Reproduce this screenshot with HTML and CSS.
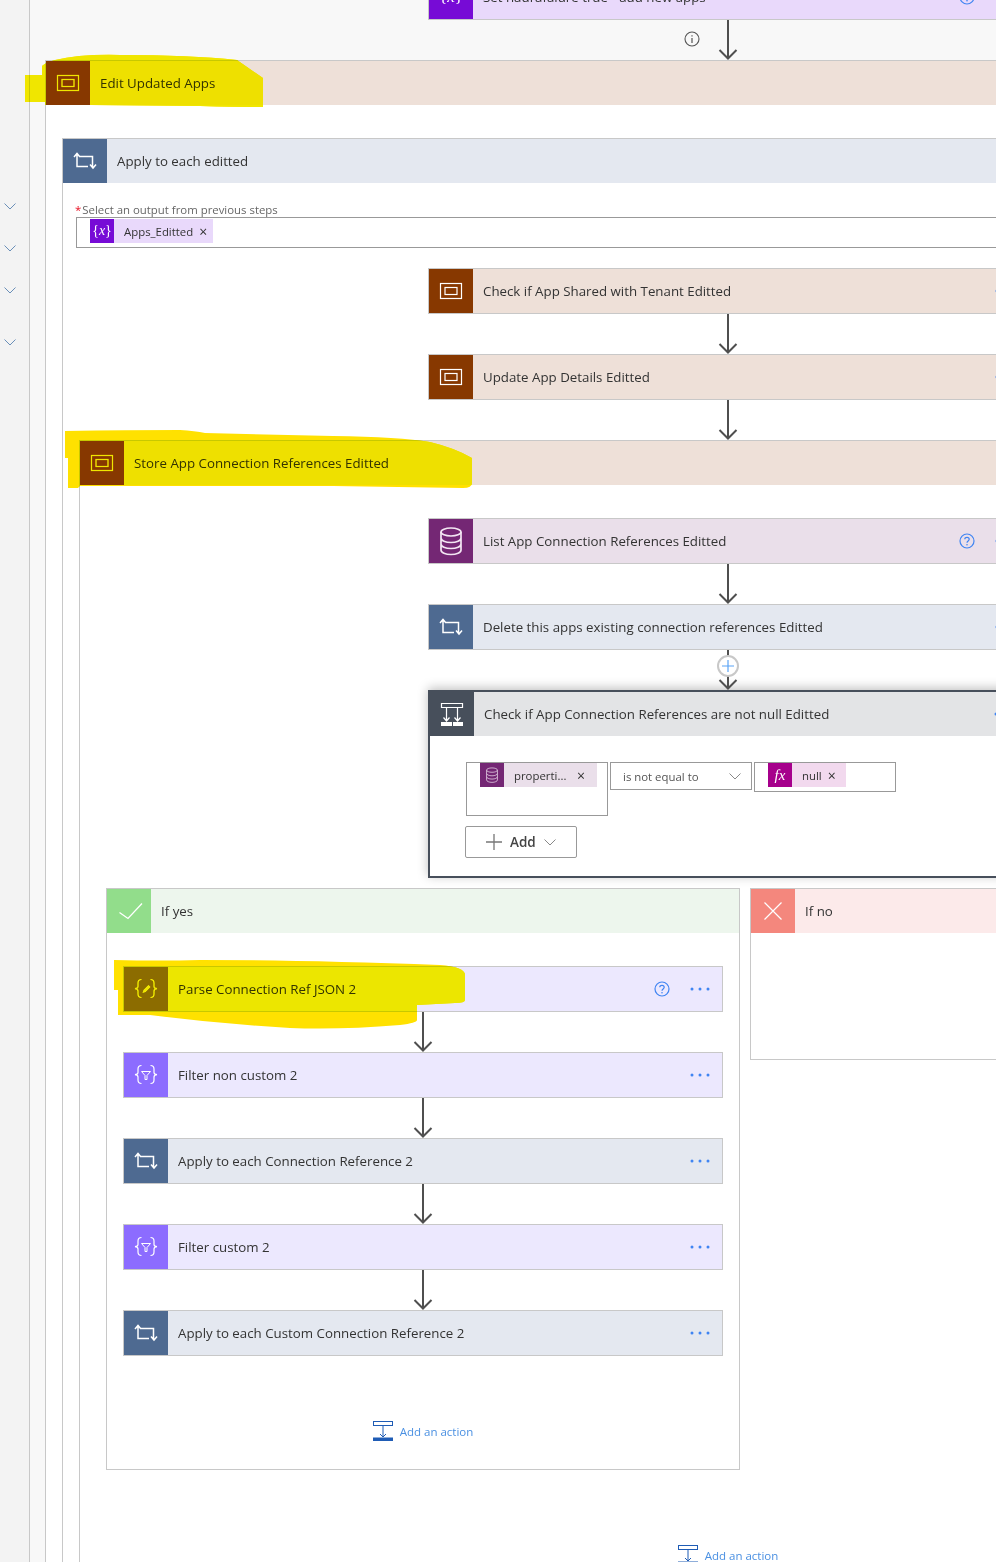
FILE: index.html
```html
<!DOCTYPE html>
<html lang="en">
<head>
<meta charset="utf-8">
<title>Flow designer</title>
<link rel="stylesheet" href="styles.css">
</head>
<body>
<svg class="defs" width="0" height="0" aria-hidden="true">
  <symbol id="i-control" viewBox="0 0 44 44"><rect x="11.500" y="14.500" width="21" height="15" fill="none" stroke="#fff" stroke-width="1.200"/><rect x="16" y="18.500" width="12" height="7" fill="none" stroke="#fff" stroke-width="1.200"/></symbol>
  <symbol id="i-loop" viewBox="0 0 44 44"><path d="M14 15v12.500h11M17 17.500h12.500V28M11 18l3-3.500 3 3.500M27 25.500l3 3.500 3-3.500" fill="none" stroke="#fff" stroke-width="1.500"/></symbol>
  <symbol id="i-db" viewBox="0 0 44 44"><g fill="none" stroke="#f3e6f3" stroke-width="1.700"><ellipse cx="22" cy="13" rx="10" ry="4"/><path d="M12 13v18c0 2.500 4.500 4.500 10 4.500s10-2 10-4.500V13M12 19c0 2.500 4.500 4.500 10 4.500s10-2 10-4.500M12 25c0 2.500 4.500 4.500 10 4.500s10-2 10-4.500"/></g></symbol>
  <symbol id="i-cond" viewBox="0 0 44 44"><path d="M11.500 11.500h21v4h-21z" fill="none" stroke="#fff" stroke-width="1.200"/><path d="M16.500 16v13M27.500 16v13M13.500 25.500l3 3.500 3-3.500M24.500 25.500l3 3.500 3-3.500" fill="none" stroke="#fff" stroke-width="1.200"/><path d="M11 30h11v4H11zM23 30h10v4H23z" fill="#fff"/></symbol>
  <symbol id="i-check" viewBox="0 0 44 44"><path d="M12.500 23.500l8.500 6 14-15" fill="none" stroke="#fff" stroke-width="1.300"/></symbol>
  <symbol id="i-cross" viewBox="0 0 44 44"><path d="M13.500 13.500l17 17M30.500 13.500l-17 17" fill="none" stroke="#fff" stroke-width="1.200"/></symbol>
  <symbol id="i-braces" viewBox="0 0 44 44"><path d="M17.500 12.500c-3 0-3.500 1.500-3.500 3.500v3.500c0 1.500-1 2-3 2.200 2 .2 3 .7 3 2.200V27c0 2 .5 3.500 3.500 3.500M26.500 12.500c3 0 3.500 1.500 3.500 3.500v3.500c0 1.500 1 2 3 2.200-2 .2-3 .7-3 2.200V27c0 2-.5 3.500-3.500 3.500" fill="none" stroke="currentColor" stroke-width="1.200"/></symbol>
  <symbol id="i-help" viewBox="0 0 16 16"><circle cx="8" cy="8" r="7" fill="none" stroke="#3f84f2" stroke-width="1.200"/><path d="M5.800 6.300c0-1.300 1-2 2.200-2s2.200.8 2.200 2c0 1.700-2.200 1.700-2.200 3.500" fill="none" stroke="#3f84f2" stroke-width="1.200"/><circle cx="8" cy="11.700" r=".8" fill="#3f84f2"/></symbol>
  <symbol id="i-dots" viewBox="0 0 22 4"><circle cx="3" cy="2" r="1.500"/><circle cx="11" cy="2" r="1.500"/><circle cx="19" cy="2" r="1.500"/></symbol>
  <symbol id="i-arrow" viewBox="0 0 20 40"><path d="M10 0v38M1.500 30l8.500 8.500 8.500-8.500" fill="none" stroke="#4f4f4f" stroke-width="2"/></symbol>
  <symbol id="i-chev" viewBox="0 0 12 7"><path d="M.5.500L6 6l5.500-5.500" fill="none" stroke="currentColor"/></symbol>
  <symbol id="i-add" viewBox="0 0 20 20"><rect x=".5" y=".5" width="19" height="4" fill="none" stroke="#1f5cb5"/><path d="M10 5v11M7 13l3 3 3-3" fill="none" stroke="#1f5cb5"/><path d="M0 16.500h20V20H0z" fill="#1f5cb5"/></symbol>
</svg>

<div class="page">
  <aside class="rail">
    <svg class="rail__chev"><use href="#i-chev"/></svg>
    <svg class="rail__chev"><use href="#i-chev"/></svg>
    <svg class="rail__chev"><use href="#i-chev"/></svg>
    <svg class="rail__chev rail__chev--far"><use href="#i-chev"/></svg>
  </aside>

  <main class="canvas">
    <div class="node node--var">
      <span class="node__icon var-glyph">{<i>x</i>}</span>
      <span class="node__title">Set hadrafalure true - add new apps</span>
      <span class="node__actions"><svg class="help"><use href="#i-help"/></svg><svg class="dots"><use href="#i-dots"/></svg></span>
    </div>
    <div class="arrow">
      <svg class="arrow__line"><use href="#i-arrow"/></svg>
      <svg class="arrow__info" viewBox="0 0 16 16"><circle cx="8" cy="8" r="7" fill="none" stroke="#555" stroke-width="1.100"/><path d="M8 7v5M8 4.200v1.300" stroke="#555" stroke-width="1.200"/></svg>
    </div>

    <section class="scope scope--edit">
      <header class="head head--control">
        <span class="node__icon"><svg class="glyph"><use href="#i-control"/></svg></span>
        <span class="node__title">Edit Updated Apps</span>
      </header>
      <div class="scope__body">

        <section class="scope scope--loop">
          <header class="head head--loop">
            <span class="node__icon"><svg class="glyph"><use href="#i-loop"/></svg></span>
            <span class="node__title">Apply to each editted</span>
          </header>
          <div class="loop__body">
            <div class="field-wrap">
              <div class="field-label"><span class="req">*</span>Select an output from previous steps</div>
              <div class="field">
                <span class="chip chip--var"><span class="chip__icon var-glyph">{<i>x</i>}</span><span class="chip__text">Apps_Editted</span><span class="chip__x">×</span></span>
              </div>
            </div>

            <div class="node node--control node--first">
              <span class="node__icon"><svg class="glyph"><use href="#i-control"/></svg></span>
              <span class="node__title">Check if App Shared with Tenant Editted</span>
              <span class="node__actions"><svg class="dots"><use href="#i-dots"/></svg></span>
            </div>
            <svg class="arrow__line"><use href="#i-arrow"/></svg>
            <div class="node node--control">
              <span class="node__icon"><svg class="glyph"><use href="#i-control"/></svg></span>
              <span class="node__title">Update App Details Editted</span>
              <span class="node__actions"><svg class="dots"><use href="#i-dots"/></svg></span>
            </div>
            <svg class="arrow__line"><use href="#i-arrow"/></svg>

            <section class="scope scope--store">
              <header class="head head--control">
                <span class="node__icon"><svg class="glyph"><use href="#i-control"/></svg></span>
                <span class="node__title">Store App Connection References Editted</span>
              </header>
              <div class="scope__body">
                <div class="node node--db">
                  <span class="node__icon"><svg class="glyph"><use href="#i-db"/></svg></span>
                  <span class="node__title">List App Connection References Editted</span>
                  <span class="node__actions"><svg class="help"><use href="#i-help"/></svg><svg class="dots"><use href="#i-dots"/></svg></span>
                </div>
                <svg class="arrow__line"><use href="#i-arrow"/></svg>
                <div class="node node--loop">
                  <span class="node__icon"><svg class="glyph"><use href="#i-loop"/></svg></span>
                  <span class="node__title">Delete this apps existing connection references Editted</span>
                  <span class="node__actions"><svg class="dots"><use href="#i-dots"/></svg></span>
                </div>
                <div class="arrow arrow--plus">
                  <svg class="arrow__line"><use href="#i-arrow"/></svg>
                  <span class="plus"><svg viewBox="0 0 12 12"><path d="M6 0v12M0 6h12" stroke="#5ba4f5" stroke-width="1.200"/></svg></span>
                </div>

                <section class="cond">
                  <header class="cond__head">
                    <span class="cond__icon"><svg class="glyph"><use href="#i-cond"/></svg></span>
                    <span class="node__title">Check if App Connection References are not null Editted</span>
                    <span class="node__actions"><svg class="dots"><use href="#i-dots"/></svg></span>
                  </header>
                  <div class="cond__body">
                    <div class="cond__row">
                      <div class="cell cell--left">
                        <span class="chip chip--db"><span class="chip__icon"><svg class="chip__glyph"><use href="#i-db"/></svg></span><span class="chip__text chip__text--prop">properti...</span><span class="chip__x">×</span></span>
                      </div>
                      <div class="cell cell--op"><span>is not equal to</span><svg class="op__chev"><use href="#i-chev"/></svg></div>
                      <div class="cell cell--right">
                        <span class="chip chip--fx"><span class="chip__icon fx-glyph">fx</span><span class="chip__text">null</span><span class="chip__x">×</span></span>
                      </div>
                    </div>
                    <button class="add-btn" type="button">
                      <svg class="add-btn__plus" viewBox="0 0 16 16"><path d="M8 0v16M0 8h16" stroke="#777" stroke-width="1.300"/></svg>
                      <span>Add</span>
                      <svg class="add-btn__chev"><use href="#i-chev"/></svg>
                    </button>
                  </div>
                </section>

                <div class="branches">
                  <section class="branch branch--yes">
                    <header class="branch__head">
                      <span class="node__icon"><svg class="glyph"><use href="#i-check"/></svg></span>
                      <span class="node__title">If yes</span>
                    </header>
                    <div class="branch__body">
                      <div class="node node--filter">
                        <span class="node__icon braces"><svg class="glyph"><use href="#i-braces"/></svg><svg class="glyph glyph--inner" viewBox="0 0 44 44"><path d="M18.500 26l1-3 5-5 2 2-5 5z" fill="#fff"/></svg></span>
                        <span class="node__title">Parse Connection Ref JSON 2</span>
                        <span class="node__actions"><svg class="help"><use href="#i-help"/></svg><svg class="dots"><use href="#i-dots"/></svg></span>
                      </div>
                      <svg class="arrow__line"><use href="#i-arrow"/></svg>
                      <div class="node node--filter">
                        <span class="node__icon braces"><svg class="glyph"><use href="#i-braces"/></svg><svg class="glyph glyph--inner" viewBox="0 0 44 44"><path d="M17.500 18.500h9l-3.500 4v4h-2v-4z" fill="none" stroke="#fff"/></svg></span>
                        <span class="node__title">Filter non custom 2</span>
                        <span class="node__actions"><svg class="dots"><use href="#i-dots"/></svg></span>
                      </div>
                      <svg class="arrow__line"><use href="#i-arrow"/></svg>
                      <div class="node node--loop">
                        <span class="node__icon"><svg class="glyph"><use href="#i-loop"/></svg></span>
                        <span class="node__title">Apply to each Connection Reference 2</span>
                        <span class="node__actions"><svg class="dots"><use href="#i-dots"/></svg></span>
                      </div>
                      <svg class="arrow__line"><use href="#i-arrow"/></svg>
                      <div class="node node--filter">
                        <span class="node__icon braces"><svg class="glyph"><use href="#i-braces"/></svg><svg class="glyph glyph--inner" viewBox="0 0 44 44"><path d="M17.500 18.500h9l-3.500 4v4h-2v-4z" fill="none" stroke="#fff"/></svg></span>
                        <span class="node__title">Filter custom 2</span>
                        <span class="node__actions"><svg class="dots"><use href="#i-dots"/></svg></span>
                      </div>
                      <svg class="arrow__line"><use href="#i-arrow"/></svg>
                      <div class="node node--loop">
                        <span class="node__icon"><svg class="glyph"><use href="#i-loop"/></svg></span>
                        <span class="node__title">Apply to each Custom Connection Reference 2</span>
                        <span class="node__actions"><svg class="dots"><use href="#i-dots"/></svg></span>
                      </div>
                      <a class="add-action add-action--inner"><svg class="add-action__icon"><use href="#i-add"/></svg><span>Add an action</span></a>
                    </div>
                  </section>

                  <section class="branch branch--no">
                    <header class="branch__head">
                      <span class="node__icon"><svg class="glyph"><use href="#i-cross"/></svg></span>
                      <span class="node__title">If no</span>
                    </header>
                  </section>
                </div>

                <a class="add-action add-action--outer"><svg class="add-action__icon"><use href="#i-add"/></svg><span>Add an action</span></a>
              </div>
            </section>
          </div>
        </section>

      </div>
    </section>
  </main>

  <svg class="marker" viewBox="0 0 996 1562" aria-hidden="true">
    <defs>
      <clipPath id="clip-heads">
        <rect x="0" y="50" width="996" height="58"/>
        <rect x="79" y="440" width="917" height="45"/>
        <rect x="123" y="966" width="600" height="46"/>
      </clipPath>
      <path id="strokes" d="M25 75H42V66Q46 62 55 60Q80 54 120 55Q190 55 237 60L263 78V107Q240 107 200 106L90 105H45V102H25ZM65 431Q130 430 180 430Q195 431 205 433L333 436Q400 437 430 442Q455 448 472 458V483Q472 488 463 488L333 486H80L78 488H68V458H65ZM114 960Q160 961 200 960Q300 960 440 965Q465 967 465 975V1000Q465 1003 455 1003L417 1005V1020Q417 1023 400 1025Q340 1030 290 1028Q220 1024 150 1015H118V990H114Z"/>
    </defs>
    <use href="#strokes" fill="#ffe100"/>
    <use href="#strokes" fill="#f0e600" clip-path="url(#clip-heads)"/>
  </svg>
</div>
</body>
</html>
```
FILE: styles.css
```css
* { box-sizing: border-box; }
html, body { margin: 0; padding: 0; overflow: hidden; }
body { font-family: "Open Sans", "Noto Sans", sans-serif; font-size: 13.300px; color: #333; background: #fff; }
.defs { position: absolute; }

.page { position: relative; display: flex; width: 996px; height: 1562px; overflow: hidden; background: #f8f8f8; }

/* left rail */
.rail { flex: none; width: 30px; display: flex; flex-direction: column; align-items: flex-start; padding: 203px 0 0 4px; background: #f3f3f3; border-right: 1px solid #c8c8c8; }
.rail__chev { width: 12px; height: 7px; margin-bottom: 35px; color: #6a8fb8; }
.rail__chev--far { margin-top: 10px; }

/* canvas */
.canvas { flex: none; width: 1396px; margin-top: -26px; display: flex; flex-direction: column; align-items: center; }

/* node */
.node { flex: none; display: flex; align-items: center; width: 600px; height: 46px; border: 1px solid #c8c8c8; }
.node--first { margin-top: 20px; }
.node__icon { flex: none; position: relative; display: flex; align-items: center; justify-content: center; width: 44px; height: 44px; color: #fff; }
.node__title { padding-left: 10px; white-space: nowrap; }
.node__actions { margin-left: auto; display: flex; align-items: center; padding-right: 11px; }
.glyph { display: block; width: 44px; height: 44px; }
.glyph--inner { position: absolute; left: 0; top: 0; }
.help { width: 16px; height: 16px; margin-right: 19px; }
.dots { width: 22px; height: 4px; fill: #3f84f2; }
.var-glyph { font-family: "Liberation Serif", serif; font-size: 17px; color: #fff; }

.node--var { background: #e9d9fb; }
.node--var .node__icon { background: #770bd6; }
.node--control, .head--control { background: #eee0d8; }
.node--control .node__icon, .head--control .node__icon { background: #873800; }
.node--db { background: #eadfea; }
.node--db .node__icon { background: #742774; }
.node--loop, .head--loop { background: #e4e8f0; }
.node--loop .node__icon, .head--loop .node__icon { background: #4e6a91; }
.node--filter { background: #ece8fe; }
.node--filter .node__icon { background: #8c6cff; }

/* connectors */
.arrow { position: relative; flex: none; width: 20px; height: 40px; }
.arrow__line { display: block; flex: none; width: 20px; height: 40px; }
.arrow__info { position: absolute; left: -34px; top: 11px; width: 16px; height: 16px; }
.arrow--plus { z-index: 1; }
.plus { position: absolute; left: -1px; top: 5px; display: flex; align-items: center; justify-content: center; width: 22px; height: 22px; background: #fff; border: 2px solid #c8c8c8; border-radius: 50%; }
.plus svg { width: 12px; height: 12px; }

/* scopes */
.scope { flex: none; background: #fff; border: 1px solid #c8c8c8; }
.scope--edit { width: 1366px; height: 1600px; }
.scope--loop { width: 1332px; }
.scope--store { width: 1298px; }
.head { display: flex; align-items: center; height: 44px; }
.scope__body { display: flex; flex-direction: column; align-items: center; padding-top: 33px; }
.loop__body { display: flex; flex-direction: column; align-items: center; padding-top: 20px; }

/* apply-to-each field */
.field-wrap { align-self: stretch; padding: 0 13px; }
.field-label { height: 14px; margin-left: -1px; font-size: 11.400px; line-height: 14px; color: #666; white-space: nowrap; }
.req { color: #e81123; padding-right: 1px; }
.field { height: 31px; padding: 1px 0 0 13px; border: 1px solid #999; }

/* chips */
.chip { display: inline-flex; align-items: center; height: 24px; font-size: 11.400px; vertical-align: top; }
.chip__icon { flex: none; display: flex; align-items: center; justify-content: center; width: 24px; height: 24px; color: #fff; }
.chip__text { padding-left: 10px; white-space: nowrap; }
.chip__x { padding: 0 6px; font-size: 14px; }
.chip--var { background: #e9d9fb; }
.chip--var .chip__icon { background: #770bd6; font-size: 14px; }
.chip--db { background: #eadfea; }
.chip--db .chip__icon { background: #742774; }
.chip--db .chip__x { padding-right: 12px; }
.chip__glyph { width: 24px; height: 24px; opacity: .75; }
.chip__text--prop { width: 67px; }
.chip--fx { background: #f2d9ee; }
.chip--fx .chip__icon { background: #a6008c; }
.chip--fx .chip__x { padding-right: 10px; }
.fx-glyph { font-family: "Liberation Serif", serif; font-style: italic; font-size: 15px; }

/* condition */
.cond { flex: none; width: 600px; height: 188px; background: #fff; border: 2px solid #474f5b; box-shadow: 0 -2px 10px rgba(0, 0, 0, .25); }
.cond__head { display: flex; align-items: center; height: 44px; background: #e3e4e6; }
.cond__icon { flex: none; width: 44px; height: 44px; background: #474f5b; }
.cond__body { padding: 26px 0 0 36px; }
.cond__row { display: flex; align-items: flex-start; gap: 2px; }
.cell { flex: none; width: 142px; border: 1px solid #999; font-size: 11.400px; }
.cell--left { height: 54px; padding-left: 13px; }
.cell--op { display: flex; align-items: center; justify-content: space-between; height: 28px; padding: 0 10px 0 12px; color: #555; }
.op__chev { width: 12px; height: 7px; color: #888; }
.cell--right { height: 30px; padding-left: 13px; }
.add-btn { display: flex; align-items: center; width: 112px; height: 32px; margin: 10px 0 0 -1px; padding: 0 0 0 20px; font: 600 13.500px "Open Sans", "Noto Sans", sans-serif; color: #444; background: #fff; border: 1px solid #999; border-radius: 2px; }
.add-btn__plus { width: 16px; height: 16px; margin-right: 8px; }
.add-btn__chev { width: 12px; height: 7px; margin-left: 8px; color: #888; }

/* branches */
.branches { flex: none; display: flex; align-items: flex-start; gap: 10px; margin-top: 10px; }
.branch { flex: none; background: #fff; border: 1px solid #c8c8c8; }
.branch--yes { width: 634px; height: 582px; }
.branch--no { width: 600px; height: 172px; }
.branch__head { display: flex; align-items: center; height: 44px; }
.branch--yes .branch__head { background: #edf6ed; }
.branch--yes .branch__head .node__icon { background: #92dd8b; }
.branch--no .branch__head { background: #fceaea; }
.branch--no .branch__head .node__icon { background: #f4877d; }
.branch__body { display: flex; flex-direction: column; align-items: center; padding-top: 33px; }

/* add action */
.add-action { flex: none; display: flex; align-items: center; gap: 7px; font-size: 11.500px; color: #4a90e2; white-space: nowrap; }
.add-action__icon { width: 20px; height: 20px; }
.add-action--inner { margin-top: 65px; }
.add-action--outer { margin-top: 75px; }

/* highlighter strokes */
.marker { position: absolute; left: 0; top: 0; width: 996px; height: 1562px; mix-blend-mode: darken; pointer-events: none; }
```
